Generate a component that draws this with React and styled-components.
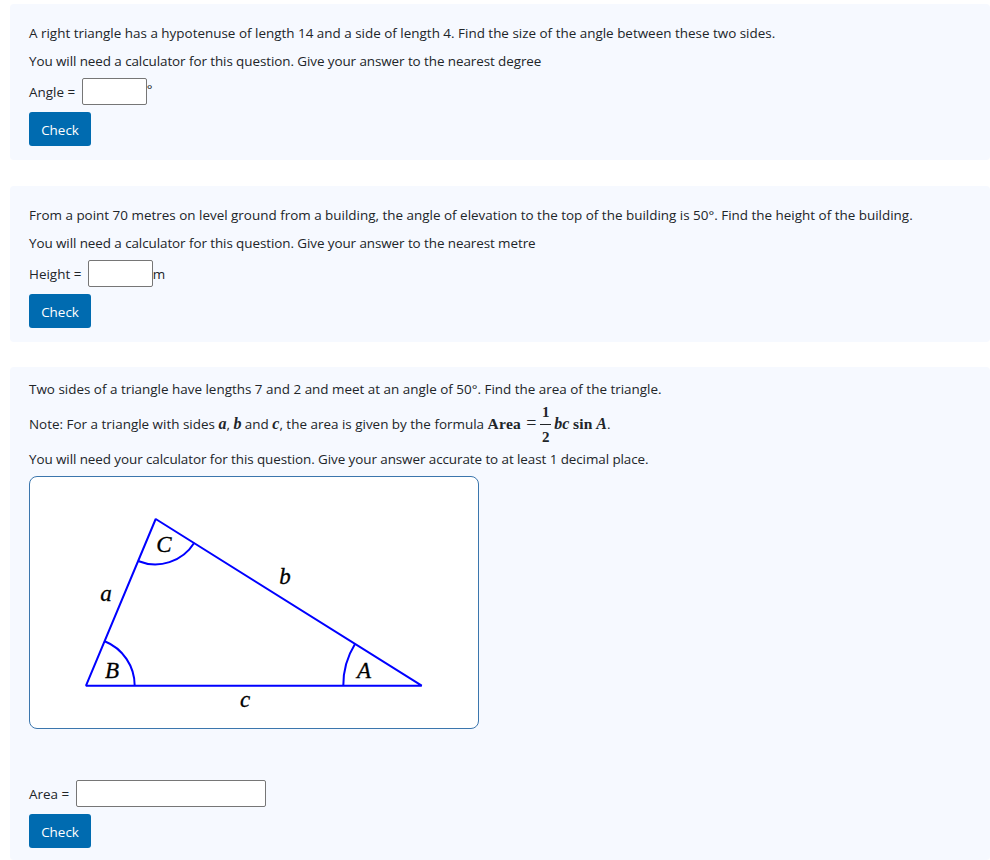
import React from "react";
import styled, { createGlobalStyle } from "styled-components";

const GlobalStyle = createGlobalStyle`
  body {
    margin: 0;
    background: #ffffff;
    color: #212529;
    font-family: "Open Sans", "Noto Sans", sans-serif;
    font-size: 13.45px;
    line-height: 21px;
  }
`;

const Page = styled.div`
  padding: 4px 0 0 10px;
`;

const Card = styled.section`
  background: #f6f9ff;
  border-radius: 4px;
  padding: ${props => (props.$tight ? "12px 19px 12px" : "19px 19px 14px")};
  margin-bottom: ${props => props.$gap || 0}px;
`;

const Para = styled.p`
  margin: 0 0 ${props => props.$after || 7}px;
  letter-spacing: ${props => props.$squeeze || 0}px;
`;

const FormulaPara = styled.p`
  margin: 0 0 7px;
  height: 35px;
  line-height: 33px;
  white-space: nowrap;
`;

const AnswerRow = styled.div`
  display: flex;
  align-items: center;
  height: 27px;
  margin-top: ${props => props.$top || 0}px;
`;

const Label = styled.label`
  margin-right: 6.5px;
  padding-top: 2px;
`;

const Input = styled.input`
  box-sizing: border-box;
  width: ${props => props.$width || 65}px;
  height: 27px;
  padding: 0 4px;
  background: #ffffff;
  border: 1px solid #767676;
  border-radius: 2px;
`;

const Unit = styled.span`
  align-self: ${props => (props.$raised ? "flex-start" : "center")};
  line-height: ${props => (props.$raised ? "22px" : "21px")};
  padding-top: ${props => (props.$raised ? 0 : 2)}px;
`;

const CheckButton = styled.button`
  display: block;
  width: 62px;
  height: 34px;
  margin-top: 7px;
  padding: 2px 0 0;
  background: #006bb0;
  color: #ffffff;
  border: 0;
  border-radius: 3px;
  font: inherit;
`;

const Bold = styled.span`
  font-family: "Liberation Serif", serif;
  font-weight: 700;
  font-size: 15.5px;
  letter-spacing: 0.3px;
`;

const Italic = styled.span`
  font-family: "Liberation Serif", serif;
  font-style: italic;
  font-weight: 700;
  font-size: 16px;
`;

const Equals = styled.span`
  font-family: "Liberation Serif", serif;
  font-size: 18px;
  margin: 0 4px 0 5px;
`;

const Fraction = styled.span`
  display: inline-block;
  vertical-align: middle;
  width: 11px;
  margin: -12px 3px -12px 0;
  font-family: "Liberation Serif", serif;
  font-weight: 700;
  font-size: 15px;
  line-height: 17px;
`;

const Numerator = styled.span`
  display: block;
  padding-bottom: 3px;
  text-align: center;
  border-bottom: 1px solid #212529;
`;

const Denominator = styled.span`
  display: block;
  padding-top: 4px;
  text-align: center;
`;

const Figure = styled.div`
  box-sizing: border-box;
  width: 450px;
  height: 253px;
  background: #ffffff;
  border: 1px solid #3b76ad;
  border-radius: 8px;
`;

const DiagramSvg = styled.svg`
  display: block;
`;

const DiagramLabel = styled.text`
  font-family: "Liberation Serif", serif;
  font-style: italic;
  font-size: 23px;
  fill: #000000;
  stroke: #000000;
  stroke-width: 0.3;
  text-anchor: middle;
  dominant-baseline: central;
`;

const labels = [
  ["C", 135, 68],
  ["a", 77, 117],
  ["b", 256, 100],
  ["c", 216, 223],
  ["B", 83, 194],
  ["A", 335, 194]
];

const Triangle = () => (
  <DiagramSvg width="448" height="251" viewBox="1 1 448 251">
    <g fill="none" stroke="#0000ff" strokeWidth="2" strokeLinejoin="bevel">
      <path d="M126.7 43 L57 209.7 L392.7 209.7 Z" />
      <path d="M109 85 A46 46 0 0 0 165.3 66.7" />
      <path d="M75.7 165.3 A48 48 0 0 1 105.7 209.7" />
      <path d="M326 168 A78 78 0 0 0 314.3 209.7" />
    </g>
    {labels.map(([text, x, y]) => (
      <DiagramLabel key={text} x={x} y={y}>
        {text}
      </DiagramLabel>
    ))}
  </DiagramSvg>
);

const App = () => {
  return (
    <Page>
      <GlobalStyle />
      <Card $gap={26}>
        <Para>A right triangle has a hypotenuse of length 14 and a side of length 4. Find the size of the angle between these two sides.</Para>
        <Para $squeeze={-0.08} $after={6}>You will need a calculator for this question. Give your answer to the nearest degree</Para>
        <AnswerRow>
          <Label>Angle =</Label>
          <Input />
          <Unit $raised>°</Unit>
        </AnswerRow>
        <CheckButton>Check</CheckButton>
      </Card>

      <Card $gap={25}>
        <Para>From a point 70 metres on level ground from a building, the angle of elevation to the top of the building is 50°. Find the height of the building.</Para>
        <Para $squeeze={-0.08} $after={6}>You will need a calculator for this question. Give your answer to the nearest metre</Para>
        <AnswerRow>
          <Label>Height =</Label>
          <Input />
          <Unit>m</Unit>
        </AnswerRow>
        <CheckButton>Check</CheckButton>
      </Card>

      <Card $tight>
        <Para>Two sides of a triangle have lengths 7 and 2 and meet at an angle of 50°. Find the area of the triangle.</Para>
        <FormulaPara>
          Note: For a triangle with sides <Italic>a</Italic>, <Italic>b</Italic> and <Italic>c</Italic>, the area is given by the formula <Bold>Area</Bold>
          <Equals>=</Equals>
          <Fraction>
            <Numerator>1</Numerator>
            <Denominator>2</Denominator>
          </Fraction>
          <Italic>bc</Italic> <Bold>sin</Bold> <Italic>A</Italic>.
        </FormulaPara>
        <Para $squeeze={-0.08} $after={6}>You will need your calculator for this question. Give your answer accurate to at least 1 decimal place.</Para>
        <Figure>
          <Triangle />
        </Figure>
        <AnswerRow $top={51}>
          <Label>Area =</Label>
          <Input $width={190} />
        </AnswerRow>
        <CheckButton>Check</CheckButton>
      </Card>
    </Page>
  );
};

export default App;
